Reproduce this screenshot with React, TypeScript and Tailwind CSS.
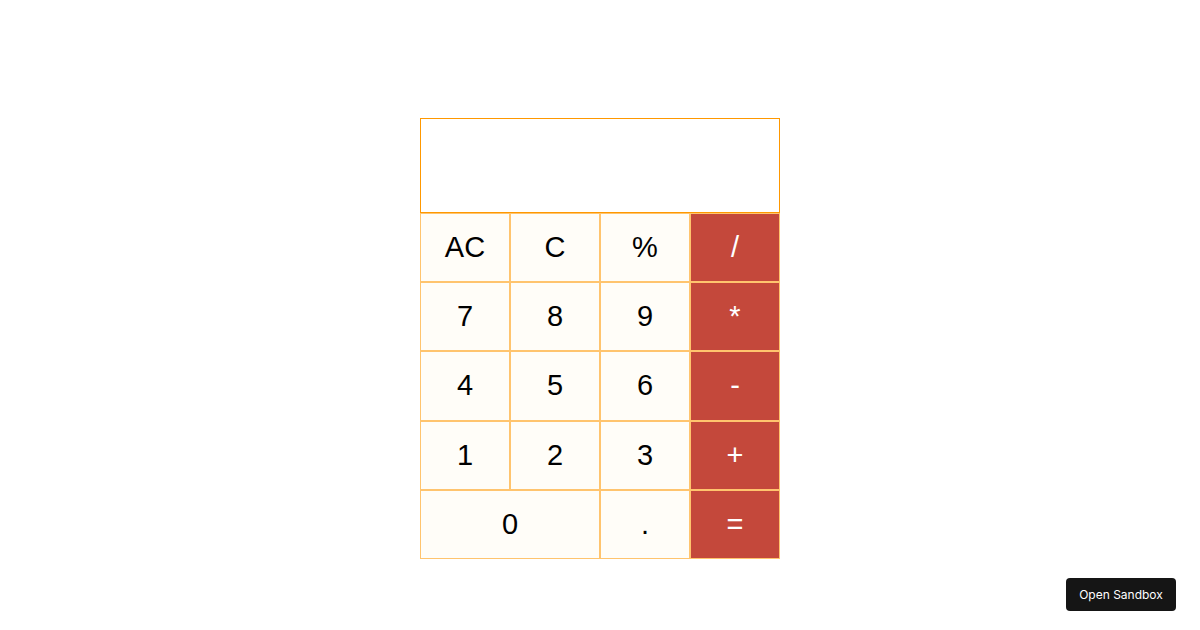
const keys: { label: string; wide?: boolean; op?: boolean }[] = [
  { label: 'AC' },
  { label: 'C' },
  { label: '%' },
  { label: '/', op: true },
  { label: '7' },
  { label: '8' },
  { label: '9' },
  { label: '*', op: true },
  { label: '4' },
  { label: '5' },
  { label: '6' },
  { label: '-', op: true },
  { label: '1' },
  { label: '2' },
  { label: '3' },
  { label: '+', op: true },
  { label: '0', wide: true },
  { label: '.' },
  { label: '=', op: true },
];

export default function App() {
  return (
    <div className="relative h-[630px] w-full bg-white font-['Liberation_Sans',Arial,sans-serif]">
      <div className="mx-auto w-[360px] pt-[118px]">
        {/* display */}
        <div className="h-[95px] border border-[#ff9800] bg-white" />
        {/* keypad */}
        <div className="grid grid-cols-4">
          {keys.map((k) => (
            <button
              key={k.label}
              className={
                'flex h-[69.2px] items-center justify-center border border-[#ffc46e] text-[29px] leading-none ' +
                (k.wide ? 'col-span-2 ' : '') +
                (k.op ? 'bg-[#c4483b] text-white' : 'bg-[#fffdf8] text-black')
              }
            >
              {k.label}
            </button>
          ))}
        </div>
      </div>

      <button className="absolute bottom-[19px] right-[24px] h-[33px] w-[110px] rounded-[4px] bg-[#151515] text-[12px] text-white font-['Inter',sans-serif]">
        Open Sandbox
      </button>
    </div>
  );
}
